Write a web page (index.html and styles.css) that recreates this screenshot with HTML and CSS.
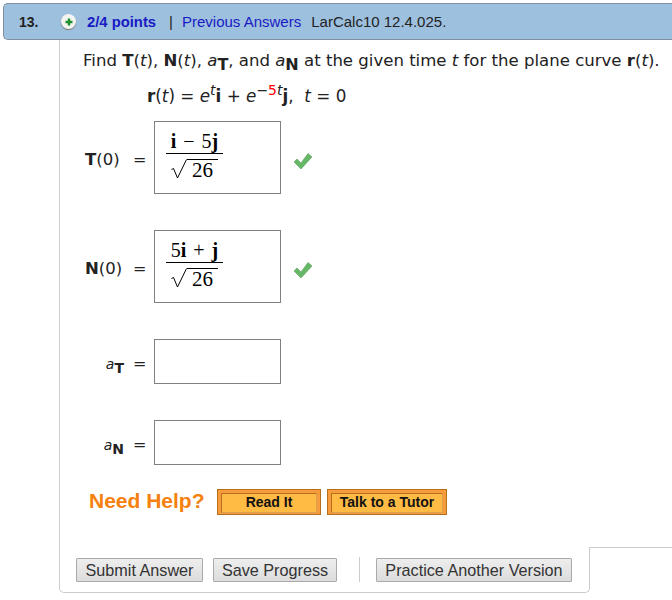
FILE: index.html
```html
<!DOCTYPE html>
<html lang="en">
<head>
<meta charset="UTF-8" />
<title>Question 13</title>
<link rel="stylesheet" href="styles.css">
</head>
<body>

<header class="qhead">
  <span class="qnum">13.</span>
  <span class="plus">
    <svg width="10" height="10" viewBox="0 0 10 10"><path d="M5 1.5v7M1.5 5h7" stroke="#1f8f2c" stroke-width="2.4"/></svg>
  </span>
  <span class="points">2/4 points</span>
  <span class="sep">|</span>
  <a class="prev">Previous Answers</a>
  <span class="ref">LarCalc10 12.4.025.</span>
</header>

<main class="question">
  <p class="prompt">Find <b>T</b>(<i>t</i>), <b>N</b>(<i>t</i>), <i>a</i><sub>T</sub>, and <i>a</i><sub>N</sub> at the given time <i>t</i> for the plane curve <b>r</b>(<i>t</i>).</p>
  <p class="given"><b>r</b>(<i>t</i>) = <i>e</i><sup><i>t</i></sup><b>i</b> + <i>e</i><sup>−<span class="red">5</span><i>t</i></sup><b>j</b>,&nbsp; <i>t</i> = 0</p>

  <div class="answers">
    <div class="answer first">
      <span class="lbl vec"><b>T</b>(0)</span>
      <span class="eq">=</span>
      <div class="box tall">
        <div class="frac">
          <div class="num"><b>i</b> − 5<b>j</b></div>
          <div class="den">
            <svg class="rad" width="16" height="21" viewBox="0 0 16 21"><path d="M0.500 10.500l2-1 4 9.500 9-18.500" fill="none" stroke="#000"/></svg>
            <span class="radicand">26</span>
          </div>
        </div>
      </div>
      <svg class="check" width="20" height="17" viewBox="0 0 20 17"><path d="M1 9l3-3 4 4 7-9.500 4 3.500L8 16z" fill="#66b866" stroke="#5aa05a" stroke-width=".6"/></svg>
    </div>
    <div class="answer second">
      <span class="lbl vec"><b>N</b>(0)</span>
      <span class="eq">=</span>
      <div class="box tall">
        <div class="frac">
          <div class="num">5<b>i</b> + <b>j</b></div>
          <div class="den">
            <svg class="rad" width="16" height="21" viewBox="0 0 16 21"><path d="M0.500 10.500l2-1 4 9.500 9-18.500" fill="none" stroke="#000"/></svg>
            <span class="radicand">26</span>
          </div>
        </div>
      </div>
      <svg class="check" width="20" height="17" viewBox="0 0 20 17"><path d="M1 9l3-3 4 4 7-9.500 4 3.500L8 16z" fill="#66b866" stroke="#5aa05a" stroke-width=".6"/></svg>
    </div>
    <div class="answer third">
      <span class="lbl"><i>a</i><sub>T</sub></span>
      <span class="eq">=</span>
      <div class="box"></div>
    </div>
    <div class="answer fourth">
      <span class="lbl"><i>a</i><sub>N</sub></span>
      <span class="eq">=</span>
      <div class="box"></div>
    </div>
  </div>

  <div class="help">
    <span class="need">Need Help?</span>
    <button class="help-btn read"><span>Read It</span></button>
    <button class="help-btn tutor"><span>Talk to a Tutor</span></button>
  </div>
</main>

<div class="foot">
  <div class="actions">
    <button class="act submit">Submit Answer</button>
    <button class="act save">Save Progress</button>
    <span class="divider"></span>
    <button class="act practice">Practice Another Version</button>
  </div>
  <div class="foot-rest"></div>
</div>

</body>
</html>
```

FILE: styles.css
```css
body {
  margin: 0;
  padding-top: 3px;
  background: #fff;
  color: #222;
  font-family: 'Liberation Sans', Arial, sans-serif;
  overflow-x: hidden;
}

/* Question header bar */
.qhead {
  display: flex;
  align-items: center;
  height: 35px;
  margin-left: 3px;
  background: #9dc0de;
  border: 1px solid #7f8f9f;
  border-right: none;
  border-radius: 5px 0 0 5px;
  font-size: 15px;
  white-space: nowrap;
}
.qnum {
  margin-left: 15px;
  width: 42px;
  font-size: 14px;
  font-weight: 700;
}
.plus {
  display: flex;
  align-items: center;
  justify-content: center;
  width: 15px;
  height: 15px;
  border-radius: 50%;
  background: #f4f4f0;
  box-shadow: 0 1px 1px #777;
}
.points {
  margin-left: 11px;
  font-size: 14.800px;
  font-weight: 700;
  color: #1a1ac4;
}
.sep { margin-left: 13px; }
.prev {
  margin-left: 9px;
  color: #1a1ac4;
}
.ref { margin-left: 10px; }

/* Question body */
.question {
  margin-left: 59px;
  width: 530px;
  height: 507px;
  border-left: 1px solid #ccc;
  font-family: 'DejaVu Sans', Verdana, sans-serif;
  font-size: 16.560px;
}
.prompt {
  margin: 0;
  padding: 11px 0 0 23px;
  line-height: 20px;
  white-space: nowrap;
}
.given {
  margin: 0;
  padding: 15px 0 0 87px;
  line-height: 20px;
  font-size: 16.800px;
}
sub, sup { line-height: 0; }
sub {
  font-size: 16px;
  font-weight: 700;
  font-style: normal;
}
sup { font-size: 14px; }
.red { color: #f00; }

/* Answer rows */
.answers { padding-top: 15px; }
.answer {
  display: flex;
  align-items: center;
  font-size: 14px;
}
.second,
.third,
.fourth { margin-top: 36px; }
.lbl {
  box-sizing: border-box;
  width: 73px;
  padding: 4px 9px 0 0;
  text-align: right;
}
.lbl.vec {
  padding: 4px 0 0 25px;
  text-align: left;
  font-size: 16.500px;
}
.answer .lbl sub { font-size: 14px; }
.eq {
  width: 21px;
  padding-top: 4px;
  font-size: 16px;
}
.box {
  width: 125px;
  height: 43px;
  border: 1px solid #808080;
}
.box.tall {
  height: 71px;
  display: flex;
  align-items: center;
}
.check {
  margin: 7px 0 0 12px;
}

/* Typeset fraction */
.frac {
  margin: 0 0 3px 11px;
  width: 57px;
  text-align: center;
  font-family: 'Liberation Serif', 'Times New Roman', serif;
  font-size: 20px;
  word-spacing: 2px;
  line-height: 20px;
  color: #000;
}
.num {
  border-bottom: 1px solid #000;
  line-height: 16px;
  padding-bottom: 4px;
}
.den {
  display: flex;
  justify-content: center;
  padding-top: 5px;
  font-size: 21px;
}
.rad { flex: none; }
.radicand {
  border-top: 1px solid #000;
  padding: 0 5px;
  line-height: 20px;
}

/* Need help */
.help {
  display: flex;
  align-items: center;
  margin-top: 24px;
  padding-left: 29px;
  font-family: 'Liberation Sans', Arial, sans-serif;
}
.need {
  width: 128px;
  padding-bottom: 2px;
  font-size: 21px;
  font-weight: 700;
  color: #f5810f;
}
.help-btn {
  height: 26px;
  margin: 0 6px 0 0;
  padding: 3px;
  background: #f79b3c;
  border: 1px solid #b5701f;
  font: 700 14px 'Liberation Sans', Arial, sans-serif;
  color: #111;
}
.help-btn span {
  display: block;
  height: 18px;
  line-height: 16px;
  background: #ffbb44;
  border: 1px solid #b5701f;
  border-right-color: #d9a050;
  border-bottom-color: #d9a050;
}
.read { width: 104px; }
.tutor { width: 120px; }

/* Bottom actions */
.foot {
  display: flex;
  height: 46px;
}
.actions {
  display: flex;
  align-items: flex-start;
  box-sizing: border-box;
  margin-left: 59px;
  width: 531px;
  height: 46px;
  padding: 11px 0 0 16px;
  border: 1px solid #ccc;
  border-top: none;
  border-radius: 0 0 5px 5px;
}
.foot-rest {
  flex: 1;
  border-top: 1px solid #ccc;
}
.act {
  height: 24px;
  padding: 0;
  background: linear-gradient(#eee, #dcdcdc);
  border: 1px solid #aaa;
  border-radius: 1px;
  font: 16.200px 'Liberation Sans', Arial, sans-serif;
  color: #333;
}
.submit { width: 127px; }
.save {
  width: 124px;
  margin-left: 10px;
}
.divider {
  width: 1px;
  height: 25px;
  margin: -1px 16px 0 22px;
  background: #ccc;
}
.practice { width: 196px; }
```
